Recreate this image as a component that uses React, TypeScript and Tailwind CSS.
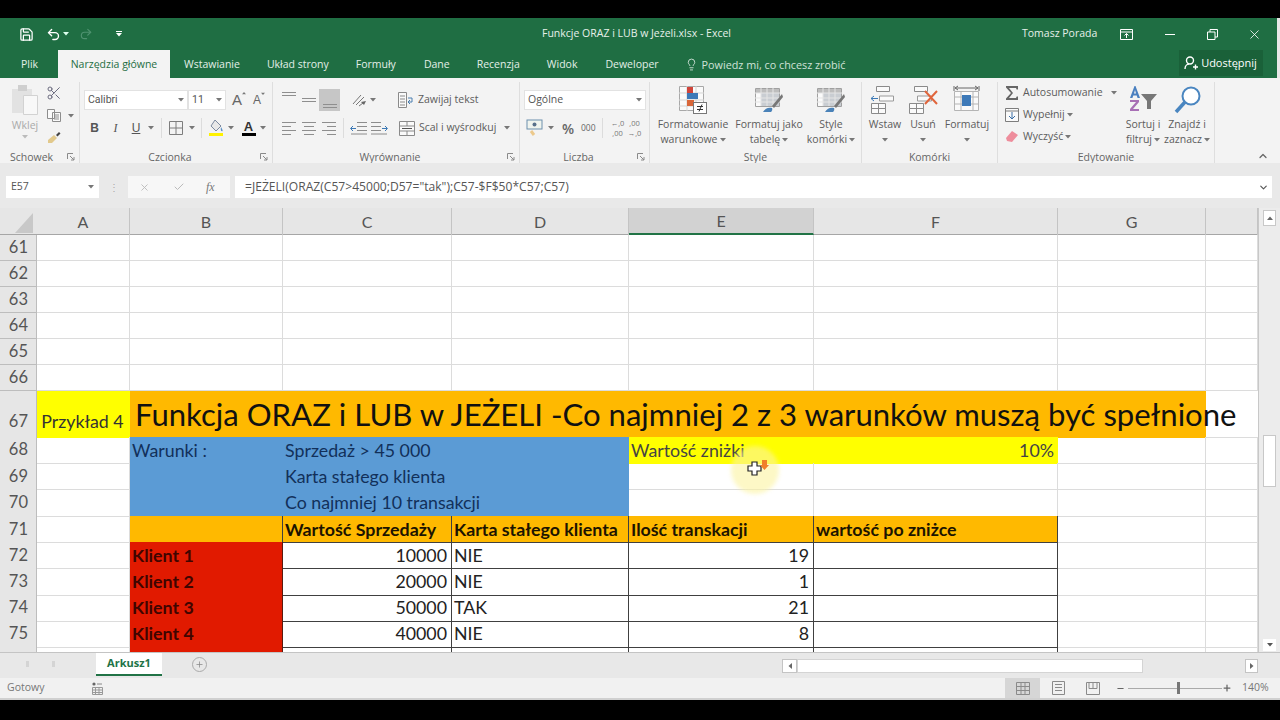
import React from "react";
import { Scissors, Lightbulb, X, Check, ChevronUp, ChevronDown, Minus, Plus, Undo2, Redo2, Save } from "lucide-react";

const ui = "font-['Open_Sans','Liberation_Sans',sans-serif]";
const rowGrid = "grid grid-cols-[37px_93px_153px_169px_177px_185px_244px_148px_52px]";

const Caret = ({ c = "#777", className = "" }: { c?: string; className?: string }) => (
  <svg width="6" height="4" viewBox="0 0 6 4" className={className}><path d="M0 0h6L3 3.5z" fill={c} /></svg>
);
const Launcher = () => (
  <svg width="8" height="8" viewBox="0 0 8 8" className="shrink-0"><path d="M0.5 6V.5H6M3 3l4 4M7 4v3H4" fill="none" stroke="#8a8a8a" strokeWidth="1" /></svg>
);
const Label = ({ children, launcher }: { children: React.ReactNode; launcher?: boolean }) => (
  <div className="h-[12px] flex items-center justify-between">
    <span className="text-[10.5px] leading-[12px] text-[#666] flex-1 text-center">{children}</span>
    {launcher && <span className="mr-[4px] flex"><Launcher /></span>}
  </div>
);
const Sep = ({ x = 6 }: { x?: number }) => <span className="w-px h-[20px] bg-[#dcdcdc] shrink-0" style={{ marginLeft: x, marginRight: x }} />;

const Lines = ({ kind }: { kind: string }) => {
  const map: Record<string, number[][]> = {
    top: [[2, 16, 1], [2, 16, 4]],
    mid: [[2, 16, 7], [2, 16, 10]],
    bot: [[2, 16, 13], [2, 16, 16]],
    left: [[2, 16, 3], [2, 11, 7], [2, 16, 11], [2, 11, 15]],
    center: [[2, 16, 3], [4, 14, 7], [2, 16, 11], [4, 14, 15]],
    right: [[2, 16, 3], [7, 16, 7], [2, 16, 11], [7, 16, 15]],
  };
  return (
    <svg width="18" height="18" viewBox="0 0 18 18">
      {map[kind].map((l, i) => <path key={i} d={`M${l[0]} ${l[2]}.5H${l[1]}`} stroke="#8e8e8e" />)}
    </svg>
  );
};

const Paste = () => (
  <svg width="28" height="32" viewBox="0 0 28 32">
    <rect x="1" y="5" width="20" height="24" fill="#e2e2e2" />
    <rect x="7" y="1" width="9" height="6" fill="#cfcfcf" />
    <path d="M12.5 11.5h14v19h-14z" fill="#f8f8f8" stroke="#d2d2d2" />
  </svg>
);
const CopyI = () => (
  <svg width="16" height="15" viewBox="0 0 16 15"><path d="M1.5 1.5h7v9h-7zM6.5 4.5h8v9h-8zM8 7h5M8 9h5M8 11h5" fill="#fafafa" stroke="#8d8d8d" /></svg>
);
const Brush = () => (
  <svg width="16" height="14" viewBox="0 0 16 14"><path d="M2 10l6-5 3 3-5 5H2z" fill="#e2c98c" /><path d="M10 5l3-3 1.5 1.5-3 3z" fill="#444" /></svg>
);
const Borders = () => (
  <svg width="14" height="14" viewBox="0 0 14 14"><path d="M.5.5h13v13H.5zM7 .5v13M.5 7h13" fill="none" stroke="#7d7d7d" /></svg>
);
const Fill = () => (
  <svg width="16" height="18" viewBox="0 0 16 18">
    <path d="M7 1l6 6-5 5-5-5z" fill="#e8e8e8" stroke="#7c8aa0" />
    <path d="M13 8c1 2 2 3 1.5 4s-2.5 0-1.5-4z" fill="#5a8fc4" />
    <rect x="1" y="14" width="14" height="3" fill="#fff200" />
  </svg>
);
const Orient = () => (
  <svg width="16" height="14" viewBox="0 0 16 14"><path d="M2 11L10 2M5 12l8-8M8 13l4-3" stroke="#777" fill="none" /><path d="M10 9l5-1-2 4z" fill="#666" /></svg>
);
const Indent = ({ flip }: { flip?: boolean }) => (
  <svg width="18" height="14" viewBox="0 0 18 14" style={flip ? { transform: "scaleX(-1)" } : undefined}>
    <path d="M7 1.5h10M7 5.5h10M7 9.5h10M1 13h16" stroke="#8c8c8c" fill="none" />
    <path d="M1 7.5h5M3 5l-2.5 2.5L3 10" stroke="#3b78b5" fill="none" />
  </svg>
);
const Wrap = () => (
  <svg width="16" height="16" viewBox="0 0 16 16"><path d="M.5.5h8v15h-8zM2 4h5M2 7h5M2 10h5M2 13h5" fill="#fafafa" stroke="#8a8a8a" /><path d="M10 6h4v4h-3M12 8l-2 2 2 2" fill="none" stroke="#4a7fb0" /></svg>
);
const Merge = () => (
  <svg width="16" height="15" viewBox="0 0 16 15"><path d="M.5.5h15v14H.5zM.5 5h15M.5 10h15M8 .5V5M8 10v4.5" fill="#fafafa" stroke="#8a8a8a" /><path d="M3 7.5h10" stroke="#555" /></svg>
);
const Money = () => (
  <svg width="18" height="18" viewBox="0 0 18 18"><rect x="1" y="1" width="15" height="9" fill="#f0f4ee" stroke="#6c90ad" /><circle cx="8.5" cy="5.5" r="2" fill="#58708a" /><path d="M5 12l3 4" stroke="#ecc98c" strokeWidth="3" /></svg>
);
const DecText = ({ a, b }: { a: string; b: string }) => (
  <span className="w-[17px] flex flex-col gap-[1px] items-center text-[7.5px] leading-[9px] text-[#777] whitespace-nowrap">
    <span className="h-[9px]">{a}</span><span className="h-[9px]">{b}</span>
  </span>
);
const CondFmt = () => (
  <svg width="30" height="30" viewBox="0 0 30 30">
    <path d="M1.5 1.5h24v24h-24z" fill="#fafafa" stroke="#a8a8a8" />
    <path d="M1 8h25M1 15h25M1 21h25M9 1v25M18 1v25" stroke="#d5d5d5" />
    <rect x="9" y="2" width="6" height="6" fill="#d0443a" />
    <rect x="9" y="8" width="11" height="6" fill="#3d79b8" />
    <rect x="9" y="15" width="7" height="6" fill="#d9673a" />
    <rect x="15.5" y="17.5" width="13" height="11" fill="#fff" stroke="#777" />
    <path d="M19 21.5h6M19 24.5h6M24 19.5l-3 7" stroke="#333" />
  </svg>
);
const TblFmt = () => (
  <svg width="30" height="30" viewBox="0 0 30 30">
    <path d="M1.5 3.5h24v18h-24z" fill="#fafafa" stroke="#a0a0a0" />
    <rect x="2" y="4" width="23" height="4" fill="#bdbdbd" />
    <rect x="7" y="8" width="18" height="13" fill="#c9cdd2" />
    <path d="M1 8h25M1 13h25M1 17h25M7 3v18M13 3v18M19 3v18" stroke="#e5e5e5" />
    <path d="M28 9L18 21l2 2 9-11z" fill="#777" />
    <path d="M9 27c2-4 6-5 9-4 1 2-1 4-1 4z" fill="#4a82b8" />
  </svg>
);
const CellIco = ({ kind }: { kind: string }) => (
  <svg width="30" height="30" viewBox="0 0 30 30">
    {kind !== "fmt" && <>
      <path d="M6.5 1.5h13v5h-13zM1.5 18.5h14v5h-14zM1.5 23.5h14v5h-14zM8.5 18.5v10" fill="#fafafa" stroke="#8a8a8a" />
      <path d="M9.5 11h14v5h-14z" fill="#fafafa" stroke="#9a9a9a" />
    </>}
    {kind === "ins" && <path d="M8 12.5H1M4 10l-3 2.5L4 15" stroke="#3b78b5" fill="none" transform="translate(0 1)" />}
    {kind === "del" && <path d="M17 6l12 13M29 6L17 19" stroke="#e0653c" strokeWidth="2" fill="none" />}
    {kind === "fmt" && <>
      <path d="M2.5 6.5h24v19h-24zM9 6v19M21 6v19M2 12h25M2 19h25" fill="#fafafa" stroke="#b4b4b4" />
      <rect x="10" y="10" width="9" height="11" fill="#3d79b8" />
      <path d="M2 1v5M27 1v5M3 3h23M6 1L3 3l3 2M23 1l3 2-3 2" stroke="#666" fill="none" />
    </>}
  </svg>
);
const Sigma = () => (
  <svg width="14" height="14" viewBox="0 0 14 14"><path d="M1 0h12v3.5h-1.4L11 2H4l4 5-4 5h7l.7-1.5H13V14H1v-1.5L6 7 1 1.5z" fill="#666" /></svg>
);
const FillDown = () => (
  <svg width="14" height="14" viewBox="0 0 14 14"><path d="M.5.5h13v13H.5zM.5 3h13" fill="#fafafa" stroke="#7d7d7d" /><path d="M7 4v7M4 8l3 3 3-3" stroke="#3b6ea5" fill="none" /></svg>
);
const Eraser = () => (
  <svg width="14" height="13" viewBox="0 0 14 13"><path d="M7 1l6 4-6 7-5-1-1-3z" fill="#ee8d9c" /></svg>
);
const SortI = () => (
  <svg width="30" height="30" viewBox="0 0 30 30">
    <path d="M6.5 1L2 13h2.4l.9-2.6h3.4L9.6 13H12L7.5 1zM6 8.5L7 5l1 3.5z" fill="#4a80c0" />
    <path d="M2 15h9v2l-6 7h6v2H2v-2l6-7H2z" fill="#a86fb5" />
    <path d="M13 9h16l-6 7v8h-4v-8z" fill="#777" />
  </svg>
);
const FindI = () => (
  <svg width="30" height="30" viewBox="0 0 30 30">
    <circle cx="19" cy="11" r="8.5" fill="#fff" stroke="#4a86c0" strokeWidth="2" />
    <path d="M13 17L4 27" stroke="#4a86c0" strokeWidth="3.5" />
  </svg>
);

const Cmd = ({ icon, l1, l2, w }: { icon: React.ReactNode; l1: string; l2?: string; w: string }) => (
  <div className={`flex flex-col items-center ${w} shrink-0`}>
    <div className="h-[30px] mt-[3px] flex items-center justify-center">{icon}</div>
    <div className="mt-[2px] text-[10.5px] leading-[15px] text-[#5c5c5c] whitespace-nowrap">{l1}</div>
    <div className="text-[10.5px] leading-[15px] text-[#5c5c5c] whitespace-nowrap flex items-center gap-[2px] h-[15px]">
      {l2}<Caret />
    </div>
  </div>
);

const Group = ({ w, children }: { w: string; children: React.ReactNode }) => (
  <div className={`${w} border-r border-[#dedede] shrink-0 flex flex-col mt-[4px]`}>{children}</div>
);

const Ribbon = () => (
  <div className={`${ui} h-[85px] bg-[#f3f3f3] flex shrink-0 text-[#555]`}>
    <Group w="w-[80px]">
      <div className="h-[69px] flex pl-[11px] pt-[2px]">
        <div className="w-[28px] flex flex-col items-center">
          <Paste />
          <span className="text-[10.5px] leading-[14px] text-[#aaa] mt-[2px]">Wklej</span>
          <Caret c="#bbb" className="mt-[3px]" />
        </div>
        <div className="ml-[7px] pt-[1px] flex flex-col gap-[7px] items-start">
          <Scissors size={16} className="text-[#6c6c80]" strokeWidth={1.5} />
          <span className="flex items-center gap-[6px]"><CopyI /><Caret /></span>
          <Brush />
        </div>
      </div>
      <div className="h-[12px] flex items-center pl-[10px] pr-[4px] justify-between">
        <span className="text-[10.5px] leading-[12px] text-[#666]">Schowek</span><Launcher />
      </div>
    </Group>
    <Group w="w-[193px]">
      <div className="h-[69px] pl-[4px] pt-[8px]">
        <div className="flex items-center h-[20px]">
          <div className="w-[104px] h-[20px] bg-white border border-[#e2e2e2] flex items-center justify-between px-[3px] text-[10.5px] font-['Roboto']">Calibri<Caret /></div>
          <div className="w-[38px] h-[20px] bg-white border border-[#e2e2e2] flex items-center justify-between px-[3px] text-[10.5px] font-['Roboto']">11<Caret /></div>
          <span className="ml-[6px] text-[15px] text-[#666] font-['Liberation_Sans'] flex items-start">A<Caret c="#777" className="rotate-180 mt-[2px] w-[4px]" /></span>
          <span className="ml-[7px] text-[12px] text-[#666] font-['Liberation_Sans'] flex items-start">A<Caret c="#777" className="mt-[1px] w-[4px]" /></span>
        </div>
        <div className="flex items-center h-[20px] mt-[8px] font-['Liberation_Sans']">
          <b className="w-[21px] text-center text-[12px] text-[#555]">B</b>
          <i className="w-[21px] text-center text-[12px] text-[#555] font-['Liberation_Serif']">I</i>
          <u className="w-[20px] text-center text-[12px] text-[#555]">U</u>
          <Caret className="ml-[2px]" /><Sep x={7} />
          <Borders /><Caret className="ml-[6px]" /><Sep x={6} />
          <Fill /><Caret className="ml-[4px]" />
          <span className="ml-[8px] w-[13px] flex flex-col items-center"><span className="text-[13px] leading-[13px] text-[#333] font-bold">A</span><span className="w-[14px] h-[3px] bg-black" /></span>
          <Caret className="ml-[5px]" />
        </div>
      </div>
      <Label launcher>Czcionka</Label>
    </Group>
    <Group w="w-[247px]">
      <div className="h-[69px] pl-[7px] pt-[7px]">
        <div className="flex items-center h-[22px]">
          <span className="w-[20px] flex"><Lines kind="top" /></span>
          <span className="w-[19px] flex"><Lines kind="mid" /></span>
          <span className="w-[21px] h-[22px] bg-[#c6c6c6] flex items-center justify-center"><Lines kind="bot" /></span>
          <span className="ml-[11px]"><Orient /></span><Caret className="ml-[3px]" />
          <span className="ml-[22px]"><Wrap /></span>
          <span className="ml-[4px] text-[10.5px] text-[#5c5c5c] whitespace-nowrap">Zawijaj tekst</span>
        </div>
        <div className="flex items-center h-[20px] mt-[7px]">
          <span className="w-[20px] flex"><Lines kind="left" /></span>
          <span className="w-[20px] flex"><Lines kind="center" /></span>
          <span className="w-[20px] flex"><Lines kind="right" /></span>
          <Sep x={3} />
          <span className="ml-[3px]"><Indent /></span>
          <span className="ml-[2px]"><Indent flip /></span>
          <span className="ml-[11px]"><Merge /></span>
          <span className="ml-[4px] text-[10.5px] text-[#5c5c5c] whitespace-nowrap">Scal i wyśrodkuj</span>
          <Caret className="ml-[8px]" />
        </div>
      </div>
      <Label launcher>Wyrównanie</Label>
    </Group>
    <Group w="w-[130px]">
      <div className="h-[69px] pl-[4px] pt-[8px]">
        <div className="w-[122px] h-[20px] bg-white border border-[#e2e2e2] flex items-center justify-between px-[3px] text-[10.5px]">Ogólne<Caret /></div>
        <div className="flex items-center h-[20px] mt-[8px] pl-[2px]">
          <Money /><Caret className="ml-[4px]" />
          <span className="ml-[8px] w-[16px] text-[14px] font-semibold text-[#666]">%</span>
          <span className="ml-[3px] w-[18px] text-[8.5px] text-[#666]">000</span>
          <Sep x={3} />
          <span className="ml-[3px] flex"><DecText a="←,0" b=",00" /></span>
          <span className="flex"><DecText a=",00" b="→,0" /></span>
        </div>
      </div>
      <Label launcher>Liczba</Label>
    </Group>
    <Group w="w-[212px]">
      <div className="h-[69px] flex pl-[5px]">
        <Cmd w="w-[76px]" icon={<CondFmt />} l1="Formatowanie" l2="warunkowe" />
        <Cmd w="w-[76px]" icon={<TblFmt />} l1="Formatuj jako" l2="tabelę" />
        <Cmd w="w-[48px]" icon={<TblFmt />} l1="Style" l2="komórki" />
      </div>
      <Label>Style</Label>
    </Group>
    <Group w="w-[136px]">
      <div className="h-[69px] flex pl-[4px]">
        <Cmd w="w-[38px]" icon={<CellIco kind="ins" />} l1="Wstaw" l2="" />
        <Cmd w="w-[38px]" icon={<CellIco kind="del" />} l1="Usuń" l2="" />
        <Cmd w="w-[50px]" icon={<CellIco kind="fmt" />} l1="Formatuj" l2="" />
      </div>
      <Label>Komórki</Label>
    </Group>
    <Group w="w-[217px]">
      <div className="h-[69px] flex pl-[7px]">
        <div className="w-[116px] pt-[3px] flex flex-col gap-[7px] text-[10.5px] text-[#5c5c5c]">
          <div className="flex items-center h-[15px]"><Sigma /><span className="ml-[4px]">Autosumowanie</span><Caret className="ml-[8px]" /></div>
          <div className="flex items-center h-[15px]"><FillDown /><span className="ml-[4px]">Wypełnij</span><Caret className="ml-[2px]" /></div>
          <div className="flex items-center h-[15px]"><Eraser /><span className="ml-[4px]">Wyczyść</span><Caret className="ml-[2px]" /></div>
        </div>
        <Cmd w="w-[44px]" icon={<SortI />} l1="Sortuj i" l2="filtruj" />
        <Cmd w="w-[44px]" icon={<FindI />} l1="Znajdź i" l2="zaznacz" />
      </div>
      <Label>Edytowanie</Label>
    </Group>
    <div className="flex-1 flex items-end justify-end pr-[11px] pb-[1px]"><ChevronUp size={12} className="text-[#666]" strokeWidth={2.5} /></div>
  </div>
);

const FormulaBar = () => (
  <div className={`${ui} h-[45px] shrink-0 bg-[#e9e9e9] pt-[13px] flex items-start pl-[6px] pr-[8px]`}>
    <div className="w-[93px] h-[22px] bg-white flex items-center justify-between px-[5px] text-[10.5px] text-[#555]">E57<Caret /></div>
    <div className="w-[29px] text-center text-[10px] text-[#aaa] leading-[22px]">⋮</div>
    <div className="w-[102px] h-[22px] bg-[#f7f7f7] flex items-center pl-[11px] text-[#bbb]">
      <X size={11} strokeWidth={2} /><Check size={12} className="ml-[23px]" strokeWidth={2} />
      <span className="ml-[21px] text-[12px] italic text-[#777] font-['Liberation_Serif']">fx</span>
    </div>
    <div className="ml-[5px] flex-1 h-[22px] bg-white flex items-center justify-between pl-[10px] pr-[3px] text-[12.1px] text-[#555] whitespace-nowrap">
      =JEŻELI(ORAZ(C57&gt;45000;D57="tak");C57-$F$50*C57;C57)
      <ChevronDown size={11} strokeWidth={2.5} />
    </div>
  </div>
);

const ColHeaders = () => {
  const cols = ["A", "B", "C", "D", "E", "F", "G", ""];
  return (
    <div className={`${rowGrid} h-[27px] bg-[#e6e6e6] border-b border-[#a6a6a6] font-['Lato',sans-serif] text-[16px] text-[#555]`}>
      <div className="flex items-end justify-end pr-[4px] pb-[2px]">
        <svg width="18" height="20" viewBox="0 0 18 20"><path d="M18 0v20H0z" fill="#c8c8c8" /></svg>
      </div>
      {cols.map((c, i) => (
        <div key={i} className={`flex items-center justify-center border-r border-[#c4c4c4] ${c === "E" ? "bg-[#d2d2d2] border-b-2 border-b-[#217346] h-[27px]" : ""}`}>{c}</div>
      ))}
    </div>
  );
};

const base = "min-w-0 flex items-center pl-[2px] pr-[4px] whitespace-nowrap";
const light = "border-r border-b border-[#dcdcdc]";
const dark = "border-r border-b border-[#404040]";
const tx = "text-[17.8px] text-[#222]";

const Hdr = ({ n, end }: { n?: number; end?: boolean }) => (
  <div className={`bg-[#e6e6e6] border-b border-r border-[#bdbdbd] flex pr-[8px] justify-end text-[16.5px] text-[#555] ${end ? "items-end pb-[3px]" : "items-center"}`}>{n}</div>
);
const Empty = ({ className = light }: { className?: string }) => <div className={className} />;

const Row = ({ n, h = "h-[26.2px]", end, children }: { n?: number; h?: string; end?: boolean; children: React.ReactNode }) => (
  <div className={`${rowGrid} ${h} font-['Lato',sans-serif] ${tx}`}>
    <Hdr n={n} end={end} />
    {children}
  </div>
);

const Blank = ({ n }: { n: number }) => (
  <Row n={n} h="h-[26px]">
    <Empty /><Empty /><Empty /><Empty /><Empty /><Empty /><Empty /><Empty />
  </Row>
);

const Client = ({ n, name, v, k, q }: { n?: number; name: string; v: string; k: string; q: string }) => (
  <Row n={n}>
    <Empty />
    <div className={`${base} bg-[#e11a00] border-b border-r border-[#5a1a10] font-bold text-[#3f0500]`}>{name}</div>
    <div className={`${base} ${dark} justify-end`}>{v}</div>
    <div className={`${base} ${dark}`}>{k}</div>
    <div className={`${base} ${dark} justify-end`}>{q}</div>
    <div className={dark} />
    <Empty /><Empty />
  </Row>
);

const blue = "bg-[#5b9bd5] text-[#12305a]";
const head = "bg-[#ffb900] font-bold text-[#1c1400]";
const topDark = "border-b border-b-[#404040] border-r border-r-[#dcdcdc]";

const Grid = () => (
  <div className="flex-1 min-h-0 overflow-hidden bg-white">
    {[61, 62, 63, 64, 65, 66].map((n) => <Blank key={n} n={n} />)}
    <Row n={67} h="h-[46px]" end>
      <div className={`${base} bg-[#ffff00] justify-center items-end pb-[3px] text-[#333]`}>Przykład 4</div>
      <div className={`${base} col-span-6 bg-[#ffb900] text-[31.1px] text-[#111] pl-[5px]`}>Funkcja ORAZ i LUB w JEŻELI -Co najmniej 2 z 3 warunków muszą być spełnione</div>
      <Empty className="border-b border-[#dcdcdc]" />
    </Row>
    <Row n={68}>
      <Empty />
      <div className={`${base} ${blue}`}>Warunki :</div>
      <div className={`${base} ${blue} col-span-2`}>Sprzedaż &gt; 45 000</div>
      <div className={`${base} bg-[#ffff00] text-[#444]`}>Wartość zniżki</div>
      <div className={`${base} bg-[#ffff00] justify-end text-[#444]`}>10%</div>
      <Empty /><Empty />
    </Row>
    <Row n={69}>
      <Empty />
      <div className="bg-[#5b9bd5]" />
      <div className={`${base} ${blue} col-span-2`}>Karta stałego klienta</div>
      <Empty /><Empty /><Empty /><Empty />
    </Row>
    <Row n={70}>
      <Empty />
      <div className="bg-[#5b9bd5] border-b border-[#404040]" />
      <div className={`${base} ${blue} col-span-2 border-b border-[#404040]`}>Co najmniej 10 transakcji</div>
      <div className={topDark} />
      <div className={topDark} />
      <Empty /><Empty />
    </Row>
    <Row n={71}>
      <Empty />
      <div className={`bg-[#ffb900] ${dark}`} />
      <div className={`${base} ${dark} ${head}`}>Wartość Sprzedaży</div>
      <div className={`${base} ${dark} ${head}`}>Karta stałego klienta</div>
      <div className={`${base} ${dark} ${head}`}>Ilość transkacji</div>
      <div className={`${base} ${dark} ${head}`}>wartość po zniżce</div>
      <Empty /><Empty />
    </Row>
    <Client n={72} name="Klient 1" v="10000" k="NIE" q="19" />
    <Client n={73} name="Klient 2" v="20000" k="NIE" q="1" />
    <Client n={74} name="Klient 3" v="50000" k="TAK" q="21" />
    <Client n={75} name="Klient 4" v="40000" k="NIE" q="8" />
    <Client name="" v="" k="" q="" />
  </div>
);

const VScroll = () => (
  <div className="w-[22px] shrink-0 bg-[#ececec] pl-[4px] pt-[2px] flex flex-col border-l border-[#c8c8c8]">
    <div className="w-[13px] h-[16px] bg-white border border-[#c8c8c8] flex items-center justify-center"><Caret c="#666" className="rotate-180" /></div>
    <div className="w-[13px] h-[52px] bg-white border border-[#c8c8c8] mt-[209px]" />
    <div className="w-[13px] h-[12px] bg-white flex items-center justify-center mt-[152px]"><Caret c="#555" /></div>
  </div>
);

const SheetBar = () => (
  <div className={`${ui} h-[26px] shrink-0 bg-[#e8e8e8] border-t border-[#c4c4c4] flex items-start text-[#aaa]`}>
    <span className="ml-[26px] mt-[8px] w-[3px] h-[6px] bg-[#d4d4d4]" />
    <span className="ml-[23px] mt-[8px] w-[3px] h-[6px] bg-[#d4d4d4]" />
    <div className="ml-[41px] w-[66px] h-[23px] bg-white border-b-2 border-[#217346] flex items-center justify-center text-[11px] font-bold text-[#217346]">Arkusz1</div>
    <div className="ml-[30px] mt-[4px] w-[15px] h-[15px] rounded-full border border-[#aaa] flex items-center justify-center text-[#888]"><Plus size={9} strokeWidth={2} /></div>
    <div className="ml-[575px] mt-[6px] w-[15px] h-[14px] bg-white border border-[#c4c4c4] flex items-center justify-center"><Caret c="#666" className="rotate-90" /></div>
    <div className="mt-[6px] w-[346px] h-[14px] bg-white border border-[#d4d4d4]" />
    <div className="ml-[102px] mt-[6px] w-[13px] h-[14px] bg-white border border-[#c4c4c4] flex items-center justify-center"><Caret c="#666" className="-rotate-90" /></div>
  </div>
);

const StatusBar = () => (
  <div className={`${ui} h-[22px] shrink-0 bg-[#f1f1f1] flex items-center text-[#777] text-[10.5px] border-b-2 border-[#d0d0d0]`}>
    <span className="ml-[7px] w-[84px]">Gotowy</span>
    <svg width="13" height="13" viewBox="0 0 13 13"><path d="M1.5 5.5h10v7h-10zM1.5 8h10M1.5 10.5h10M4.5 5.5v7M8 5.5v7" fill="none" stroke="#999" /><circle cx="3" cy="2" r="1.6" fill="#666" /><path d="M6 2h5" stroke="#888" /></svg>
    <div className="ml-[901px] w-[35px] h-[20px] bg-[#d6d6d6] flex items-center justify-center">
      <svg width="14" height="13" viewBox="0 0 14 13"><path d="M.5.5h13v12H.5zM.5 4.5h13M.5 8.5h13M5 .5v12M9 .5v12" fill="none" stroke="#8a8a8a" /></svg>
    </div>
    <div className="w-[36px] flex justify-center">
      <svg width="13" height="14" viewBox="0 0 13 14"><path d="M.5.5h12v13H.5zM3 3.5h7M3 6.5h7M3 9.5h7" fill="none" stroke="#8a8a8a" /></svg>
    </div>
    <div className="w-[34px] flex justify-center">
      <svg width="14" height="13" viewBox="0 0 14 13"><path d="M.5.5h13v12H.5zM7 .5v6M3 .5v6h8V.5" fill="none" stroke="#8a8a8a" /></svg>
    </div>
    <Minus size={9} strokeWidth={3} className="ml-[6px] text-[#666]" />
    <div className="ml-[3px] w-[94px] h-px bg-[#aaa] flex items-center">
      <span className="ml-[49px] w-[3px] h-[12px] bg-[#777]" />
    </div>
    <Plus size={10} strokeWidth={3} className="text-[#666]" />
    <span className="ml-[10px]">140%</span>
  </div>
);

const tab = "leading-[29px] ml-[27px]";

export default function App() {
  return (
    <div className="relative w-[1280px] h-[720px] overflow-hidden bg-black flex flex-col">
      <div className="h-[18px] shrink-0" />
      <div className={`${ui} h-[32px] shrink-0 bg-[#1f6e43] border-r-[3px] border-[#e8e8e8] flex items-center text-[10.5px] text-[#e6f0ea]`}>
        <Save size={15} className="ml-[19px] text-white" strokeWidth={2} />
        <Undo2 size={15} className="ml-[12px] text-white" strokeWidth={2.2} />
        <Caret c="#dfe" className="ml-[2px]" />
        <Redo2 size={14} className="ml-[10px] text-[#4f9270]" />
        <span className="ml-[23px] flex flex-col gap-[1px] items-center"><span className="w-[6px] h-px bg-white" /><Caret c="#fff" /></span>
        <span className="ml-[420px] w-[182px] text-center whitespace-nowrap">Funkcje ORAZ i LUB w Jeżeli.xlsx - Excel</span>
        <span className="ml-[298px] whitespace-nowrap">Tomasz Porada</span>
        <svg width="13" height="11" viewBox="0 0 13 11" className="ml-[23px]"><path d="M.5.5h12v10H.5zM.5 3h12M6.5 9V4.5M4.5 6.5l2-2 2 2" fill="none" stroke="#fff" /></svg>
        <span className="ml-[32px] w-[10px] h-px bg-white" />
        <svg width="11" height="11" viewBox="0 0 11 11" className="ml-[32px]"><path d="M.5 3h7.5v7.5H.5zM3 3V.5h7.5V8H8" fill="none" stroke="#fff" /></svg>
        <X size={15} className="ml-[29px] text-white" strokeWidth={1.3} />
      </div>
      <div className={`${ui} h-[28px] shrink-0 bg-[#1f6e43] border-r-[3px] border-[#e8e8e8] flex text-[10.5px] text-[#e3eee8]`}>
        <span className="w-[58px] text-center leading-[29px] pl-[1px]">Plik</span>
        <span className="w-[112px] bg-[#f3f3f3] text-[#1f6e43] text-center leading-[29px]">Narzędzia główne</span>
        <span className="ml-[14px] leading-[29px]">Wstawianie</span>
        <span className={tab}>Układ strony</span>
        <span className={tab}>Formuły</span>
        <span className="ml-[28px] leading-[29px]">Dane</span>
        <span className={tab}>Recenzja</span>
        <span className={tab}>Widok</span>
        <span className="ml-[28px] leading-[29px]">Deweloper</span>
        <span className="ml-[26px] flex items-center h-[28px]"><Lightbulb size={13} strokeWidth={1.5} /></span>
        <span className="ml-[4px] leading-[29px] text-[#cfe2d8] text-[10.8px]">Powiedz mi, co chcesz zrobić</span>
        <span className="ml-[333px] h-[26px] w-[84px] bg-[#1a6139] flex items-center justify-center gap-[3px] text-white text-[11px]">
          <svg width="14" height="14" viewBox="0 0 14 14"><circle cx="6" cy="4.5" r="3.5" fill="none" stroke="#fff" strokeWidth="1.4" /><path d="M1 13c0-3 2-5 4-5M9 11h5M11.5 8.5v5" stroke="#fff" strokeWidth="1.4" fill="none" /></svg>
          Udostępnij
        </span>
      </div>
      <Ribbon />
      <FormulaBar />
      <div className="flex h-[444px] shrink-0">
        <div className="w-[1258px] flex flex-col">
          <ColHeaders />
          <Grid />
        </div>
        <VScroll />
      </div>
      <SheetBar />
      <StatusBar />

      <div className="absolute left-[731px] top-[446px] w-[48px] h-[48px] rounded-full bg-[#fbf3a0]/60 blur-[2px]" />
      <svg className="absolute left-[746px] top-[458px]" width="26" height="22" viewBox="0 0 26 22">
        <path d="M6 4h5v4h4v5h-4v4H6v-4H2V8h4z" fill="#fff" stroke="#222" strokeWidth="1.2" />
        <path d="M16 2h5v5h2l-4.5 5L14 7h2z" fill="#f07f2a" />
      </svg>
    </div>
  );
}
